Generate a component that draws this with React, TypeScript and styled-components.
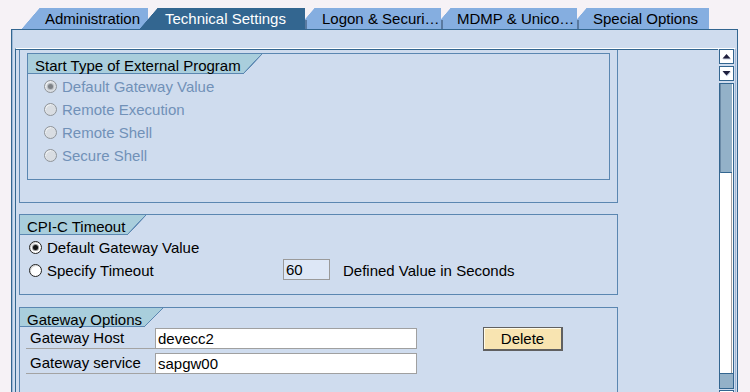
import React from 'react';
import styled, { createGlobalStyle } from 'styled-components';

const GlobalStyle = createGlobalStyle`
  html, body { margin: 0; padding: 0; background: #f6f2f6; overflow: hidden; }
  body { font-family: "Liberation Sans", Arial, sans-serif; font-size: 15px; color: #000; }
  * { box-sizing: border-box; }
`;

const BORDER = '#5b87b1';
const DARK = '#336690';
const PANEL = '#cfdcee';
const TITLE_BG = '#a9cedc';
const TAB_LIGHT = '#85aee0';

const Page = styled.div`
  width: 750px;
  height: 392px;
  overflow: hidden;
  padding: 8px 0 0 11px;
`;

const TabStrip = styled.div`
  display: flex;
  height: 21px;
  padding-left: 11px;
`;

const Tab = styled.div<{ $z: number; $first?: boolean }>`
  display: flex;
  position: relative;
  z-index: ${(p) => p.$z};
  margin-left: ${(p) => (p.$first ? 0 : -8)}px;
`;

const TabSlant = styled.div<{ $active?: boolean }>`
  width: 18px;
  height: 21px;
  background: linear-gradient(
    to top left,
    ${(p) => (p.$active ? DARK : TAB_LIGHT)} 50%,
    transparent calc(50% + 0.6px)
  );
`;

const TabBody = styled.div<{ $w: number; $pad: number; $active?: boolean; $shadow?: boolean }>`
  position: relative;
  width: ${(p) => p.$w}px;
  height: 21px;
  padding-left: ${(p) => p.$pad}px;
  background: ${(p) => (p.$active ? DARK : TAB_LIGHT)};
  color: ${(p) => (p.$active ? '#fff' : '#000')};
  line-height: 21px;
  white-space: nowrap;
  &::after {
    content: '';
    display: ${(p) => (p.$shadow ? 'block' : 'none')};
    position: absolute;
    right: -2px;
    bottom: 0;
    width: 2px;
    height: 9px;
    background: #5a7aa0;
  }
`;

const Frame = styled.div`
  display: flex;
  flex-direction: column;
  width: 727px;
  height: 380px;
  border: 1px solid ${DARK};
  border-bottom: none;
  box-shadow: inset 1px 0 0 #9fbad8;
  background: ${PANEL};
  padding: 18px 1px 0 3px;
`;

const ScrollArea = styled.div`
  display: flex;
  flex: 1;
  min-height: 0;
  border-top: 1px solid #fff;
  border-left: 1px solid ${DARK};
  border-right: 1px solid #9fb8d6;
`;

const Content = styled.div`
  flex: 1;
  display: flex;
  flex-direction: column;
  border-top: 1px solid ${DARK};
  padding-left: 3px;
  overflow: hidden;
`;

const Group = styled.section<{ $clipped?: boolean; $gap?: number }>`
  width: 599px;
  flex-shrink: 0;
  border: 1px solid ${BORDER};
  border-top-width: ${(p) => (p.$clipped ? 0 : 1)}px;
  margin-top: ${(p) => p.$gap ?? 0}px;
`;

const GroupPad = styled.div`
  padding: 3px 7px 22px 7px;
`;

const InnerBox = styled.div`
  border: 1px solid ${BORDER};
  padding-bottom: 12px;
`;

const TitleRow = styled.div<{ $h: number }>`
  display: flex;
  height: ${(p) => p.$h}px;
`;

const TitleText = styled.div`
  height: 100%;
  padding: 4px 2px 0 7px;
  line-height: 15px;
  background: ${TITLE_BG};
  border-bottom: 1px solid ${BORDER};
  white-space: nowrap;
`;

const TitleSlant = styled.div`
  width: 19px;
  height: 100%;
  background: linear-gradient(
    to top left,
    transparent calc(50% - 0.7px),
    ${BORDER} calc(50% - 0.3px),
    ${BORDER} calc(50% + 0.3px),
    ${TITLE_BG} calc(50% + 0.7px)
  );
`;

const RadioList = styled.div<{ $indent: number }>`
  display: flex;
  flex-direction: column;
  padding-top: 1px;
  padding-left: ${(p) => p.$indent}px;
`;

const RadioRow = styled.div<{ $disabled?: boolean }>`
  display: flex;
  align-items: center;
  gap: 5px;
  height: 23px;
  line-height: 23px;
  color: ${(p) => (p.$disabled ? '#7191b8' : '#000')};
  white-space: nowrap;
`;

const RadioCircle = styled.span<{ $checked?: boolean; $disabled?: boolean }>`
  display: flex;
  align-items: center;
  justify-content: center;
  flex-shrink: 0;
  width: 13px;
  height: 13px;
  border-radius: 50%;
  border: 1px solid ${(p) => (p.$disabled ? '#8f9499' : '#222')};
  background: ${(p) => (p.$disabled ? '#d9dde2' : '#fff')};
  box-shadow: inset 1px 1px 0 ${(p) => (p.$disabled ? '#eef0f2' : '#d8d8d8')};
  &::after {
    content: '';
    display: ${(p) => (p.$checked ? 'block' : 'none')};
    width: 5px;
    height: 5px;
    border-radius: 50%;
    background: ${(p) => (p.$disabled ? '#7d8186' : '#111')};
    box-shadow: 0 0 0 1px ${(p) => (p.$disabled ? '#b8bcc0' : '#9a9a9a')};
  }
`;

const CpicBody = styled.div`
  padding: 1px 0 12px 9px;
`;

const TimeoutRow = styled.div`
  display: grid;
  grid-template-columns: 241px 47px auto;
  column-gap: 13px;
  align-items: center;
  height: 23px;
`;

const ShortField = styled.input`
  width: 47px;
  height: 21px;
  margin: 0;
  padding: 0 0 0 2px;
  border: 1px solid #9a9a9a;
  background: #dde7f6;
  font: inherit;
  line-height: 19px;
  color: #000;
  outline: none;
  align-self: start;
`;

const FieldLabel = styled.span`
  white-space: nowrap;
  line-height: 23px;
`;

const GatewayGrid = styled.div`
  display: grid;
  grid-template-columns: 129px 262px 146px;
  row-gap: 1px;
  padding: 0 0 40px 6px;
`;

const GwLabel = styled.div`
  height: 22px;
  padding-left: 4px;
  line-height: 22px;
  border-bottom: 1px solid #a3a3a3;
  white-space: nowrap;
`;

const GwField = styled.input`
  width: 262px;
  height: 21px;
  margin: 1px 0 0 0;
  padding: 0 0 0 2px;
  border: 1px solid #a0a0a0;
  background: #fff;
  font: inherit;
  line-height: 19px;
  color: #000;
  outline: none;
`;

const DeleteButton = styled.button`
  justify-self: end;
  width: 80px;
  height: 24px;
  padding: 0;
  margin: 0;
  border: 1px solid #606060;
  border-right-width: 2px;
  border-bottom-width: 2px;
  box-shadow: inset 1px 1px 0 #fffbe8;
  background: #f8e4b1;
  font: inherit;
  line-height: 20px;
  color: #000;
`;

const Scrollbar = styled.div`
  width: 17px;
  display: flex;
  flex-direction: column;
  padding-left: 1px;
  flex-shrink: 0;
`;

const ScrollButton = styled.div`
  width: 15px;
  height: 15px;
  flex-shrink: 0;
  margin-bottom: 2px;
  border: 1px solid ${DARK};
  background: #fff;
  display: flex;
  align-items: center;
  justify-content: center;
`;

const Track = styled.div`
  width: 15px;
  height: 306px;
  flex-shrink: 0;
  margin-bottom: 1px;
  border: 1px solid ${DARK};
  background: #fff;
  display: flex;
  flex-direction: column;
`;

const Thumb = styled.div`
  height: 89px;
  background: #93b1c8;
  border-left: 1px solid #6b8aa6;
  border-bottom: 1px solid ${DARK};
  margin-right: 1px;
`;

const TrackSpace = styled.div`
  flex: 1;
  border-right: 1px solid #a3a3a3;
  margin-right: 1px;
`;

const TrackEnd = styled.div`
  height: 15px;
  background: #93b1c8;
  border-top: 1px solid ${DARK};
`;

const Arrow = ({ down }: { down?: boolean }) => (
  <svg width="10" height="7" viewBox="0 0 10 7">
    {down ? (
      <>
        <polygon points="1,2 9,2 5,6.5" fill="#c9d3e3" />
        <polygon points="0.5,1 8.5,1 4.5,5.5" fill="#1f1f3d" />
      </>
    ) : (
      <>
        <polygon points="1,6.5 9,6.5 5,2" fill="#c9d3e3" />
        <polygon points="0.5,5.5 8.5,5.5 4.5,1" fill="#1f1f3d" />
      </>
    )}
  </svg>
);

const Title = ({ children, h = 20 }: { children: React.ReactNode; h?: number }) => (
  <TitleRow $h={h}>
    <TitleText>{children}</TitleText>
    <TitleSlant />
  </TitleRow>
);

const Radio = ({
  label,
  checked,
  disabled,
}: {
  label: string;
  checked?: boolean;
  disabled?: boolean;
}) => (
  <RadioRow $disabled={disabled}>
    <RadioCircle $checked={checked} $disabled={disabled} />
    <span>{label}</span>
  </RadioRow>
);

const tabs = [
  { label: 'Administration', w: 108, pad: 5 },
  { label: 'Technical Settings', w: 147, pad: 7, active: true },
  { label: 'Logon & Securi…', w: 126, pad: 7 },
  { label: 'MDMP & Unico…', w: 126, pad: 6 },
  { label: 'Special Options', w: 122, pad: 6 },
];

export default function App() {
  return (
    <>
      <GlobalStyle />
      <Page>
        <TabStrip>
          {tabs.map((t, i) => (
            <Tab key={t.label} $first={i === 0} $z={t.active ? 20 : 10 - i}>
              <TabSlant $active={t.active} />
              <TabBody
                $w={t.w}
                $pad={t.pad}
                $active={t.active}
                $shadow={i < tabs.length - 1}
              >
                {t.label}
              </TabBody>
            </Tab>
          ))}
        </TabStrip>
        <Frame>
          <ScrollArea>
            <Content>
              <Group $clipped>
                <GroupPad>
                  <InnerBox>
                    <Title>Start Type of External Program</Title>
                    <RadioList $indent={16}>
                      <Radio label="Default Gateway Value" checked disabled />
                      <Radio label="Remote Execution" disabled />
                      <Radio label="Remote Shell" disabled />
                      <Radio label="Secure Shell" disabled />
                    </RadioList>
                  </InnerBox>
                </GroupPad>
              </Group>

              <Group $gap={11}>
                <Title>CPI-C Timeout</Title>
                <CpicBody>
                  <Radio label="Default Gateway Value" checked />
                  <TimeoutRow>
                    <Radio label="Specify Timeout" />
                    <ShortField readOnly value="60" />
                    <FieldLabel>Defined Value in Seconds</FieldLabel>
                  </TimeoutRow>
                </CpicBody>
              </Group>

              <Group $gap={12}>
                <Title h={19}>Gateway Options</Title>
                <GatewayGrid>
                  <GwLabel>Gateway Host</GwLabel>
                  <GwField readOnly value="devecc2" />
                  <DeleteButton type="button">Delete</DeleteButton>
                  <GwLabel>Gateway service</GwLabel>
                  <GwField readOnly value="sapgw00" />
                  <span />
                </GatewayGrid>
              </Group>
            </Content>
            <Scrollbar>
              <ScrollButton>
                <Arrow />
              </ScrollButton>
              <ScrollButton>
                <Arrow down />
              </ScrollButton>
              <Track>
                <Thumb />
                <TrackSpace />
                <TrackEnd />
              </Track>
              <ScrollButton>
                <Arrow down />
              </ScrollButton>
            </Scrollbar>
          </ScrollArea>
        </Frame>
      </Page>
    </>
  );
}
